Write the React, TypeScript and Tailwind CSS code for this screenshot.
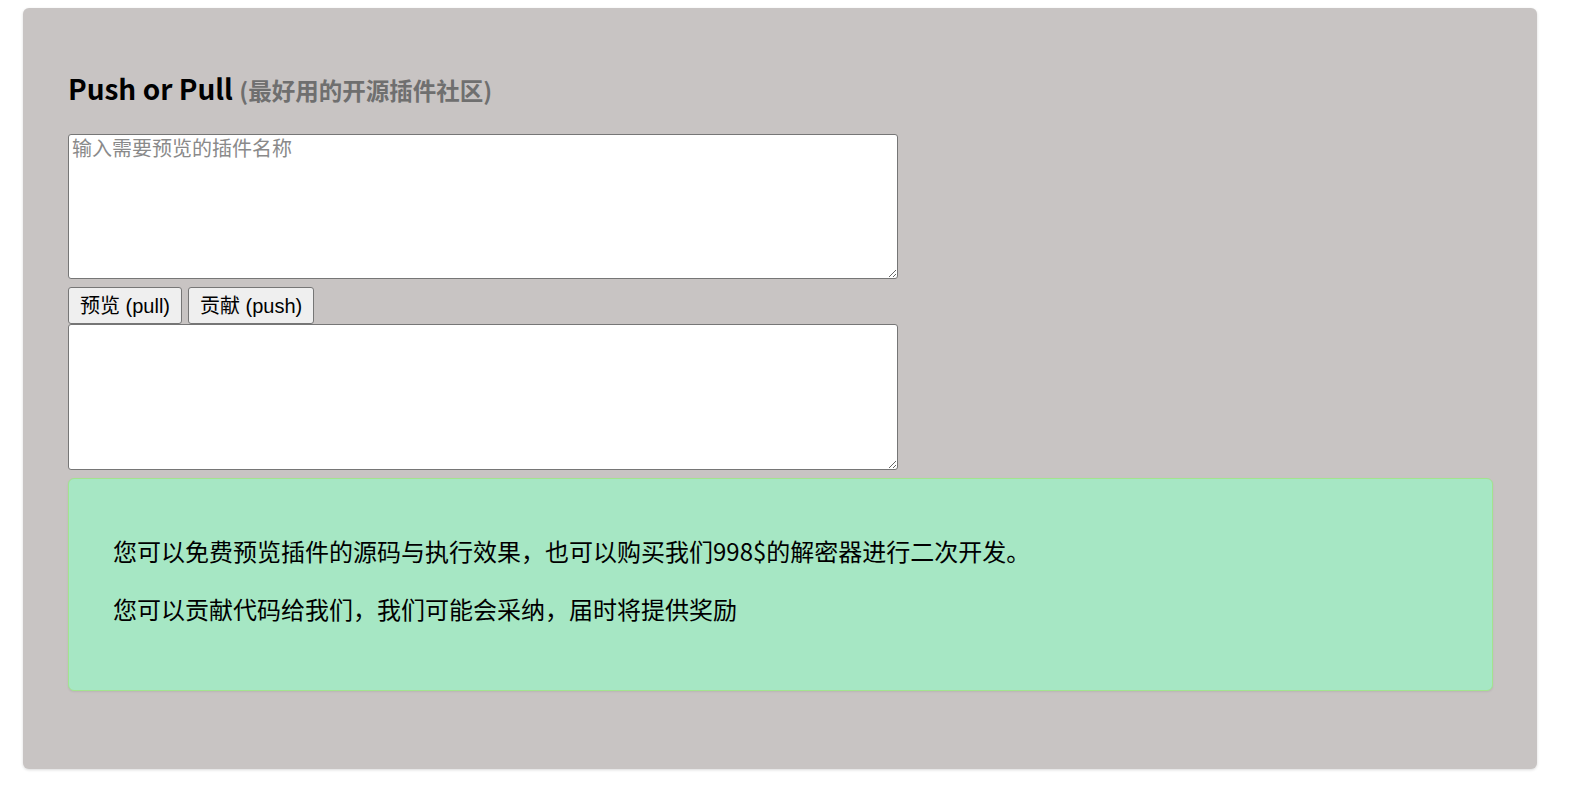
import React from 'react'

const App = () => {
  return (
    <div className="min-h-[786px] bg-white pt-[8px] pl-[23px]">
      <div
        className="flex h-[761px] w-[1514px] flex-col rounded-md bg-[#c8c4c3] px-[45px] pt-[63px] shadow-[0_1px_3px_rgba(0,0,0,0.15)]"
        style={{ fontFamily: '"Noto Sans CJK SC", "Noto Sans", sans-serif' }}
      >
        <h2 className="text-[28px] font-bold leading-[34px] text-black">
          Push or Pull <span className="text-[23.5px] text-[#6f6f6f]">(最好用的开源插件社区)</span>
        </h2>
        <textarea
          placeholder="输入需要预览的插件名称"
          className="mt-[27px] block h-[145px] w-[830px] rounded-[3px] border border-[#767676] bg-white px-[3px] py-[1px] text-[20px] leading-[26px] placeholder:text-[#8a8a8a]"
          style={{ fontFamily: '"Liberation Serif", "Noto Sans CJK SC", serif' }}
        />
        <div className="mt-[8px] flex gap-[6px]" style={{ fontFamily: '"Liberation Sans", "Noto Sans CJK SC", sans-serif' }}>
          <button className="h-[37px] rounded-[3px] border border-[#767676] bg-[#efefef] px-[11px] text-[20px] text-black">
            预览 (pull)
          </button>
          <button className="h-[37px] rounded-[3px] border border-[#767676] bg-[#efefef] px-[11px] text-[20px] text-black">
            贡献 (push)
          </button>
        </div>
        <textarea className="block h-[146px] w-[830px] rounded-[3px] border border-[#767676] bg-white" />
        <div className="mt-[8px] flex w-[1425px] flex-col gap-[24px] rounded-md border border-[#a3e38f] bg-[#a6e7c4] pb-[64px] pl-[44px] pt-[55px] text-[24px] leading-[34px] text-black shadow-[0_1px_2px_rgba(0,0,0,0.08)]">
          <p>您可以免费预览插件的源码与执行效果，也可以购买我们998$的解密器进行二次开发。</p>
          <p>您可以贡献代码给我们，我们可能会采纳，届时将提供奖励</p>
        </div>
      </div>
    </div>
  )
}

export default App
